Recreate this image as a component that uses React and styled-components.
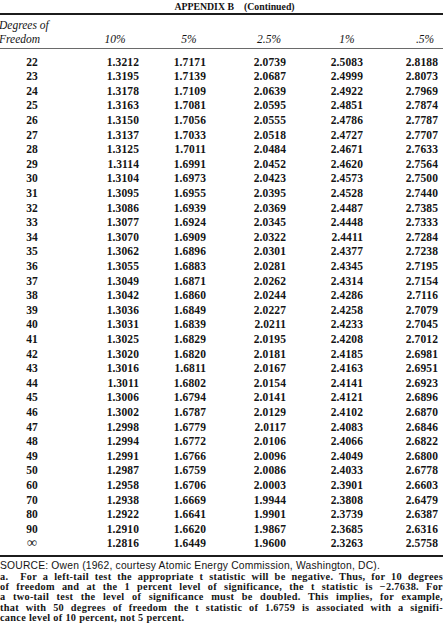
import styled, { createGlobalStyle } from "styled-components";

const GlobalStyle = createGlobalStyle`
  html, body {
    margin: 0;
    padding: 0;
    background: #fff;
  }
  body {
    width: 443px;
    height: 633px;
    overflow: hidden;
    color: #141414;
    font-family: "Liberation Serif", serif;
  }
`;

const heads = [
  { label: "10%", nudge: 8 },
  { label: "5%", nudge: 1 },
  { label: "2.5%", nudge: 1 },
  { label: "1%", nudge: 0 },
  { label: ".5%", nudge: -3 },
];

const rows = [
  ["22", "1.3212", "1.7171", "2.0739", "2.5083", "2.8188"],
  ["23", "1.3195", "1.7139", "2.0687", "2.4999", "2.8073"],
  ["24", "1.3178", "1.7109", "2.0639", "2.4922", "2.7969"],
  ["25", "1.3163", "1.7081", "2.0595", "2.4851", "2.7874"],
  ["26", "1.3150", "1.7056", "2.0555", "2.4786", "2.7787"],
  ["27", "1.3137", "1.7033", "2.0518", "2.4727", "2.7707"],
  ["28", "1.3125", "1.7011", "2.0484", "2.4671", "2.7633"],
  ["29", "1.3114", "1.6991", "2.0452", "2.4620", "2.7564"],
  ["30", "1.3104", "1.6973", "2.0423", "2.4573", "2.7500"],
  ["31", "1.3095", "1.6955", "2.0395", "2.4528", "2.7440"],
  ["32", "1.3086", "1.6939", "2.0369", "2.4487", "2.7385"],
  ["33", "1.3077", "1.6924", "2.0345", "2.4448", "2.7333"],
  ["34", "1.3070", "1.6909", "2.0322", "2.4411", "2.7284"],
  ["35", "1.3062", "1.6896", "2.0301", "2.4377", "2.7238"],
  ["36", "1.3055", "1.6883", "2.0281", "2.4345", "2.7195"],
  ["37", "1.3049", "1.6871", "2.0262", "2.4314", "2.7154"],
  ["38", "1.3042", "1.6860", "2.0244", "2.4286", "2.7116"],
  ["39", "1.3036", "1.6849", "2.0227", "2.4258", "2.7079"],
  ["40", "1.3031", "1.6839", "2.0211", "2.4233", "2.7045"],
  ["41", "1.3025", "1.6829", "2.0195", "2.4208", "2.7012"],
  ["42", "1.3020", "1.6820", "2.0181", "2.4185", "2.6981"],
  ["43", "1.3016", "1.6811", "2.0167", "2.4163", "2.6951"],
  ["44", "1.3011", "1.6802", "2.0154", "2.4141", "2.6923"],
  ["45", "1.3006", "1.6794", "2.0141", "2.4121", "2.6896"],
  ["46", "1.3002", "1.6787", "2.0129", "2.4102", "2.6870"],
  ["47", "1.2998", "1.6779", "2.0117", "2.4083", "2.6846"],
  ["48", "1.2994", "1.6772", "2.0106", "2.4066", "2.6822"],
  ["49", "1.2991", "1.6766", "2.0096", "2.4049", "2.6800"],
  ["50", "1.2987", "1.6759", "2.0086", "2.4033", "2.6778"],
  ["60", "1.2958", "1.6706", "2.0003", "2.3901", "2.6603"],
  ["70", "1.2938", "1.6669", "1.9944", "2.3808", "2.6479"],
  ["80", "1.2922", "1.6641", "1.9901", "2.3739", "2.6387"],
  ["90", "1.2910", "1.6620", "1.9867", "2.3685", "2.6316"],
  ["∞", "1.2816", "1.6449", "1.9600", "2.3263", "2.5758"],
];

const notes = [
  "a.\u00a0\u00a0For a left-tail test the appropriate t statistic will be negative. Thus, for 10 degrees",
  "of freedom and at the 1 percent level of significance, the t statistic is \u22122.7638. For",
  "a two-tail test the level of significance must be doubled. This implies, for example,",
  "that with 50 degrees of freedom the t statistic of 1.6759 is associated with a signifi-",
];

const App = () => {
  return (
    <Page>
      <GlobalStyle />
      <Title>
        APPENDIX B<TitleGap />(Continued)
      </Title>
      <Rule $thick={2} />
      <Header>
        <DfHead>
          Degrees of
          <br />
          Freedom
        </DfHead>
        {heads.map((h) => (
          <HeadCell key={h.label}>
            <Label style={{ marginRight: h.nudge }}>{h.label}</Label>
          </HeadCell>
        ))}
      </Header>
      <Rule $thick={1} $color="#6a6a6a" />
      <Body>
        {rows.map((r) => (
          <Row key={r[0]}>
            <DfCell $inf={r[0] === "∞"}>{r[0]}</DfCell>
            {r.slice(1).map((v, i) => (
              <NumCell key={i}>{v}</NumCell>
            ))}
          </Row>
        ))}
      </Body>
      <Rule $thick={2.5} />
      <Footer>
        <Source>
          SOURCE: Owen (1962, courtesy Atomic Energy Commission, Washington, DC).
        </Source>
        {notes.map((n, i) => (
          <NoteLine key={i} $full>
            {n}
          </NoteLine>
        ))}
        <NoteLine>cance level of 10 percent, not 5 percent.</NoteLine>
      </Footer>
    </Page>
  );
};

export default App;

const Page = styled.div`
  width: 443px;
  display: flex;
  flex-direction: column;
`;

const Title = styled.div`
  height: 13px;
  line-height: 14px;
  text-align: center;
  font-size: 9.8px;
  font-weight: 700;
  padding-left: 26px;
`;

const TitleGap = styled.span`
  display: inline-block;
  width: 10px;
`;

const Rule = styled.div`
  height: ${(p) => p.$thick}px;
  background: ${(p) => p.$color || "#1c1c1c"};
  width: 443px;
`;

const columns = "64px 75px 67px 80px 77px 75px";

const Header = styled.div`
  display: grid;
  grid-template-columns: ${columns};
  align-items: end;
  padding: 3px 0 2px;
  font-style: italic;
  font-size: 11.5px;
  line-height: 14px;
`;

const DfHead = styled.div`
  text-align: left;
  margin-left: -1px;
`;

const HeadCell = styled.div`
  text-align: right;
`;

const Label = styled.span`
  display: inline-block;
  width: 32px;
  text-align: center;
`;

const Body = styled.div`
  padding: 5.7px 0 4px;
`;

const Row = styled.div`
  display: grid;
  grid-template-columns: ${columns};
  height: 14.6px;
  line-height: 14.6px;
  font-size: 11.5px;
  font-weight: 700;
`;

const DfCell = styled.div`
  text-align: center;
  font-size: ${(p) => (p.$inf ? "14px" : "11.5px")};
`;

const NumCell = styled.div`
  text-align: right;
  letter-spacing: 0.1px;
`;

const Footer = styled.div`
  padding-top: 4px;
  display: flex;
  flex-direction: column;
`;

const Source = styled.div`
  font-family: "Liberation Sans", Arial, sans-serif;
  font-size: 10.3px;
  letter-spacing: 0.2px;
  line-height: 10.3px;
  height: 10.3px;
  white-space: nowrap;
`;

const NoteLine = styled.div`
  font-size: 10.3px;
  font-weight: 700;
  letter-spacing: 0.3px;
  line-height: 10.3px;
  height: 10.3px;
  white-space: ${(p) => (p.$full ? "normal" : "nowrap")};
  text-align: ${(p) => (p.$full ? "justify" : "left")};
  text-align-last: ${(p) => (p.$full ? "justify" : "left")};
`;
